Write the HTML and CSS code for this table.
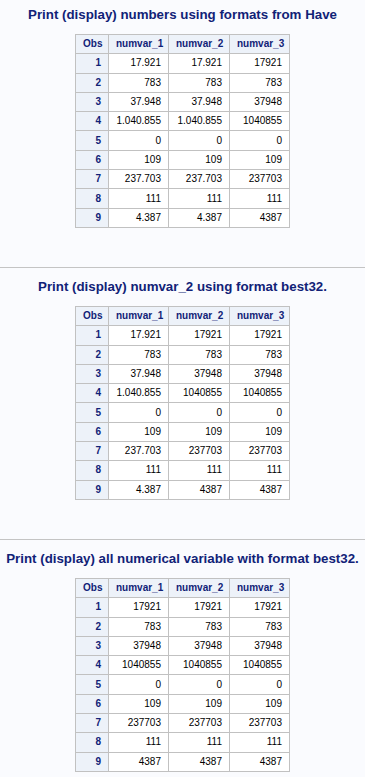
FILE: index.html
```html
<!DOCTYPE html>
<html>
<head>
<meta charset="utf-8">
<link rel="stylesheet" href="styles.css">
</head>
<body>
<div class="section first">
  <h1 class="title">Print (display) numbers using formats from Have</h1>
  <table class="table">
    <colgroup><col class="c-obs"><col class="c-num"><col class="c-num2"><col class="c-num"></colgroup>
    <thead><tr><th>Obs</th><th>numvar_1</th><th>numvar_2</th><th>numvar_3</th></tr></thead>
    <tbody>
      <tr><th class="obs">1</th><td>17.921</td><td>17.921</td><td>17921</td></tr>
      <tr><th class="obs">2</th><td>783</td><td>783</td><td>783</td></tr>
      <tr><th class="obs">3</th><td>37.948</td><td>37.948</td><td>37948</td></tr>
      <tr><th class="obs">4</th><td>1.040.855</td><td>1.040.855</td><td>1040855</td></tr>
      <tr><th class="obs">5</th><td>0</td><td>0</td><td>0</td></tr>
      <tr><th class="obs">6</th><td>109</td><td>109</td><td>109</td></tr>
      <tr><th class="obs">7</th><td>237.703</td><td>237.703</td><td>237703</td></tr>
      <tr><th class="obs">8</th><td>111</td><td>111</td><td>111</td></tr>
      <tr><th class="obs">9</th><td>4.387</td><td>4.387</td><td>4387</td></tr>
    </tbody>
  </table>
</div>
<hr class="sep">
<div class="section">
  <h1 class="title">Print (display) numvar_2 using format best32.</h1>
  <table class="table">
    <colgroup><col class="c-obs"><col class="c-num"><col class="c-num2"><col class="c-num"></colgroup>
    <thead><tr><th>Obs</th><th>numvar_1</th><th>numvar_2</th><th>numvar_3</th></tr></thead>
    <tbody>
      <tr><th class="obs">1</th><td>17.921</td><td>17921</td><td>17921</td></tr>
      <tr><th class="obs">2</th><td>783</td><td>783</td><td>783</td></tr>
      <tr><th class="obs">3</th><td>37.948</td><td>37948</td><td>37948</td></tr>
      <tr><th class="obs">4</th><td>1.040.855</td><td>1040855</td><td>1040855</td></tr>
      <tr><th class="obs">5</th><td>0</td><td>0</td><td>0</td></tr>
      <tr><th class="obs">6</th><td>109</td><td>109</td><td>109</td></tr>
      <tr><th class="obs">7</th><td>237.703</td><td>237703</td><td>237703</td></tr>
      <tr><th class="obs">8</th><td>111</td><td>111</td><td>111</td></tr>
      <tr><th class="obs">9</th><td>4.387</td><td>4387</td><td>4387</td></tr>
    </tbody>
  </table>
</div>
<hr class="sep">
<div class="section">
  <h1 class="title">Print (display) all numerical variable with format best32.</h1>
  <table class="table">
    <colgroup><col class="c-obs"><col class="c-num"><col class="c-num2"><col class="c-num"></colgroup>
    <thead><tr><th>Obs</th><th>numvar_1</th><th>numvar_2</th><th>numvar_3</th></tr></thead>
    <tbody>
      <tr><th class="obs">1</th><td>17921</td><td>17921</td><td>17921</td></tr>
      <tr><th class="obs">2</th><td>783</td><td>783</td><td>783</td></tr>
      <tr><th class="obs">3</th><td>37948</td><td>37948</td><td>37948</td></tr>
      <tr><th class="obs">4</th><td>1040855</td><td>1040855</td><td>1040855</td></tr>
      <tr><th class="obs">5</th><td>0</td><td>0</td><td>0</td></tr>
      <tr><th class="obs">6</th><td>109</td><td>109</td><td>109</td></tr>
      <tr><th class="obs">7</th><td>237703</td><td>237703</td><td>237703</td></tr>
      <tr><th class="obs">8</th><td>111</td><td>111</td><td>111</td></tr>
      <tr><th class="obs">9</th><td>4387</td><td>4387</td><td>4387</td></tr>
    </tbody>
  </table>
</div>
</body>
</html>
```

FILE: styles.css
```css
html, body {
  margin: 0;
  padding: 0;
  background: #fafbfe;
}
body {
  font-family: "Liberation Sans", Arial, sans-serif;
  color: #000000;
}
.section {
  display: flex;
  flex-direction: column;
  align-items: center;
}
.section.first {
  padding-top: 7px;
}
.title {
  margin: 0 0 11px 0;
  font-size: 13.3px;
  line-height: 16px;
  font-weight: bold;
  color: #112277;
  text-align: center;
  white-space: nowrap;
}
.table {
  border-collapse: collapse;
  table-layout: fixed;
  width: 215px;
  font-size: 10px;
  background: #ffffff;
}
.c-obs { width: 33px; }
.c-num { width: 60px; }
.c-num2 { width: 61px; }
.table tr {
  height: 19.3px;
}
.table th,
.table td {
  border: 1px solid #c1c1c1;
  padding: 0 7px;
  line-height: 12px;
  vertical-align: middle;
}
.table thead th {
  background: #edf2f9;
  color: #112277;
  font-weight: bold;
  text-align: center;
}
.table th.obs {
  background: #edf2f9;
  color: #112277;
  font-weight: bold;
  text-align: right;
}
.table td {
  text-align: right;
  color: #000000;
}
.sep {
  margin: 39px 0 11px 0;
  border: 0;
  height: 1px;
  background: #c4c4c4;
}
```
